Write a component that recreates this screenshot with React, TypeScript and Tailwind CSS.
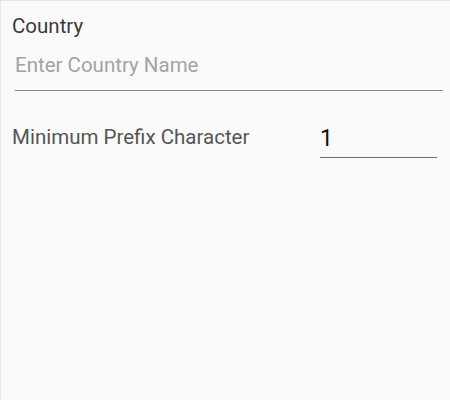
export default function App() {
  return (
    <div
      className="w-[450px] h-[400px] bg-[#fafafa] border-t border-l border-[#e6e6e6] text-[#444]"
      style={{ fontFamily: 'Roboto, "Liberation Sans", sans-serif' }}
    >
      <div className="pl-[11px] pr-[7px] pt-[13px]">
        <div className="text-[20.5px] leading-[24px] text-[#3a3a3a]">Country</div>
        <div className="ml-[3px] mt-[15px] border-b-[1.5px] border-[#8a8a8a] pb-[13px]">
          <span className="block text-[20.5px] leading-[24px] text-[#a3a3a3]">Enter Country Name</span>
        </div>
        <div className="mt-[34px] flex items-start">
          <div className="text-[20.5px] leading-[24px] text-[#555] w-[308px]">Minimum Prefix Character</div>
          <div className="w-[117px] border-b-[1.5px] border-[#6e6e6e] pt-[1px] pb-[5px]">
            <span className="block text-[23px] leading-[26px] text-[#111]">1</span>
          </div>
        </div>
      </div>
    </div>
  );
}
